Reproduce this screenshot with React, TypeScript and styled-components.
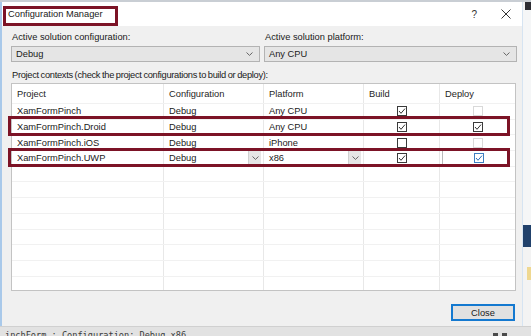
import React from 'react';
import styled, { createGlobalStyle } from 'styled-components';

const GlobalStyle = createGlobalStyle`
  html, body {
    margin: 0;
    padding: 0;
  }
  body {
    width: 531px;
    height: 336px;
    overflow: hidden;
    background: #e4e4e4;
    font-family: "Liberation Sans", "Noto Sans", sans-serif;
    color: #1a1a1a;
  }
`;

const COLS = '152px 100px 100px 76px 1fr';

const Screen = styled.div`
  width: 531px;
  height: 336px;
  display: flex;
  flex-direction: column;
  overflow: hidden;
`;

const TopStrip = styled.div`
  height: 2px;
  background: #c9ced4;
  flex: none;
`;

const Middle = styled.div`
  height: 324px;
  display: flex;
  flex: none;
`;

const Dialog = styled.div`
  width: 523px;
  box-sizing: border-box;
  border-left: 2px solid #a9c9ea;
  border-right: 1px solid #d6e4f2;
  background: #f0f0f0;
  display: flex;
  flex-direction: column;
`;

const TitleBar = styled.div`
  position: relative;
  height: 24px;
  background: #ffffff;
  display: flex;
  align-items: center;
  padding-left: 6px;
  font-size: 9.3px;
  flex: none;
`;

const TitleText = styled.span`
  flex: 1;
`;

const HelpGlyph = styled.span`
  font-size: 10px;
  color: #333;
  margin-right: 24px;
`;

const CloseX = styled.svg`
  width: 10px;
  height: 10px;
  margin-right: 11px;
`;

const Callout = styled.div<{ $top: number; $left: number; $w: number; $h: number }>`
  position: absolute;
  top: ${(p) => p.$top}px;
  left: ${(p) => p.$left}px;
  width: ${(p) => p.$w}px;
  height: ${(p) => p.$h}px;
  box-sizing: border-box;
  border: 3px solid #7c1326;
  pointer-events: none;
`;

const Body = styled.div`
  flex: 1;
  display: flex;
  flex-direction: column;
  padding: 5px 5px 0 9px;
  font-size: 9.3px;
`;

const SolutionRow = styled.div`
  display: grid;
  grid-template-columns: 249px 1fr;
  column-gap: 4px;
`;

const Field = styled.div`
  display: flex;
  flex-direction: column;
  gap: 3px;
`;

const Label = styled.div`
  height: 12px;
  line-height: 12px;
  padding-left: 1px;
`;

const Select = styled.div`
  height: 16px;
  box-sizing: border-box;
  border: 1px solid #b3b3b3;
  background: #e5e5e5;
  display: flex;
  align-items: center;
  padding: 0 6px 0 4px;
`;

const SelectText = styled.span`
  flex: 1;
`;

const Chevron = styled.svg`
  width: 7px;
  height: 4px;
`;

const ContextsLabel = styled(Label)`
  margin-top: 7px;
  letter-spacing: -0.3px;
  word-spacing: -0.5px;
`;

const TableWrap = styled.div`
  position: relative;
  margin-top: 2px;
  margin-right: 1px;
  height: 208px;
  box-sizing: border-box;
  border: 1px solid #c3c3c3;
  background: #ffffff;
`;

const Rows = styled.div`
  height: 100%;
  overflow: hidden;
`;

const HeaderRow = styled.div`
  display: grid;
  grid-template-columns: ${COLS};
  height: 19px;
  align-items: stretch;
`;

const Row = styled.div`
  display: grid;
  grid-template-columns: ${COLS};
  height: 15.7px;
  box-sizing: border-box;
  border-top: 1px solid #f1f1f1;
`;

const Cell = styled.div<{ $center?: boolean; $editing?: boolean }>`
  display: flex;
  align-items: center;
  justify-content: ${(p) => (p.$center ? 'center' : 'flex-start')};
  padding-left: ${(p) => (p.$center ? 0 : 5)}px;
  border-right: 1px solid #e8e8e8;
  box-sizing: border-box;
  overflow: hidden;
  white-space: nowrap;
  ${(p) => (p.$editing ? 'border-left: 1px solid #b9b9b9; margin-left: 2px;' : '')}
  &:last-child {
    border-right: none;
  }
`;

const HeadCell = styled(Cell)`
  color: #1e1e1e;
`;

const Combo = styled.div`
  flex: 1;
  display: flex;
  align-items: stretch;
  height: 100%;
  margin-left: -5px;
  padding-left: 5px;
  background: #ffffff;
`;

const ComboText = styled.span`
  flex: 1;
  display: flex;
  align-items: center;
`;

const ComboButton = styled.div`
  width: 12px;
  margin-right: 2px;
  background: #e6e6e6;
  border-left: 1px solid #d0d0d0;
  display: flex;
  align-items: center;
  justify-content: center;
`;

const Box = styled.svg<{ $tone: 'on' | 'off' | 'blue' }>`
  width: 10px;
  height: 10px;
  rect {
    fill: #ffffff;
    stroke: ${(p) => (p.$tone === 'off' ? '#d9d9d9' : p.$tone === 'blue' ? '#3d7fc2' : '#3a3a3a')};
  }
  polyline {
    stroke: ${(p) => (p.$tone === 'blue' ? '#2c6fb8' : '#333')};
  }
`;

const Footer = styled.div`
  height: 35px;
  display: flex;
  justify-content: flex-end;
  align-items: flex-start;
  padding-top: 13px;
  box-sizing: border-box;
`;

const Button = styled.div`
  width: 64px;
  height: 17px;
  margin-right: 2px;
  box-sizing: border-box;
  border: 2px solid #1479d0;
  background: #e1e1e1;
  display: flex;
  align-items: center;
  justify-content: center;
  font-size: 9.3px;
`;

const Gutter = styled.div`
  flex: 1;
  display: flex;
  flex-direction: column;
  background: #f3f3f3;
`;

const GutterBlock = styled.div<{ $h: number; $bg: string; $indent?: number }>`
  height: ${(p) => p.$h}px;
  background: ${(p) => p.$bg};
  margin-left: ${(p) => p.$indent ?? 0}px;
  flex: none;
`;

const BottomStrip = styled.div`
  flex: 1;
  background: #e2e2e2;
  border-top: 1px solid #d0d0d0;
  display: flex;
  overflow: hidden;
  font-family: "DejaVu Sans Mono", "Liberation Mono", monospace;
  font-size: 8.6px;
  color: #3a3a3a;
`;

const StatusText = styled.div`
  padding: 2px 0 0 5px;
  line-height: 12px;
  flex: 1;
  white-space: nowrap;
`;

const StatusMarks = styled.div`
  display: flex;
  gap: 4px;
  align-items: flex-end;
  margin-right: 24px;
  span {
    width: 5px;
    height: 3px;
    background: #4a4a4a;
  }
`;

type Tone = 'on' | 'off' | 'blue';

const Check = ({ tone, checked }: { tone: Tone; checked: boolean }) => (
  <Box $tone={tone} viewBox="0 0 10 10">
    <rect x="0.5" y="0.5" width="9" height="9" strokeWidth="1" />
    {checked && <polyline points="2,5 4,7.3 8,2.6" fill="none" strokeWidth="1" />}
  </Box>
);

const Down = () => (
  <Chevron viewBox="0 0 7 4">
    <polyline points="0.5,0.5 3.5,3.4 6.5,0.5" fill="none" stroke="#666" strokeWidth="1" />
  </Chevron>
);

type Project = {
  name: string;
  config: string;
  platform: string;
  build: [boolean, Tone];
  deploy: [boolean, Tone];
  editing?: boolean;
};

const projects: Project[] = [
  { name: 'XamFormPinch', config: 'Debug', platform: 'Any CPU', build: [true, 'on'], deploy: [false, 'off'] },
  { name: 'XamFormPinch.Droid', config: 'Debug', platform: 'Any CPU', build: [true, 'on'], deploy: [true, 'on'] },
  { name: 'XamFormPinch.iOS', config: 'Debug', platform: 'iPhone', build: [false, 'on'], deploy: [false, 'off'] },
  { name: 'XamFormPinch.UWP', config: 'Debug', platform: 'x86', build: [true, 'on'], deploy: [true, 'blue'], editing: true },
];

const App = () => {
  return (
    <>
      <GlobalStyle />
      <Screen>
        <TopStrip />
        <Middle>
          <Dialog>
            <TitleBar>
              <TitleText>Configuration Manager</TitleText>
              <HelpGlyph>?</HelpGlyph>
              <CloseX viewBox="0 0 10 10">
                <path d="M0.5 0.5 L9.5 9.5 M9.5 0.5 L0.5 9.5" stroke="#333" strokeWidth="1" />
              </CloseX>
              <Callout $top={4} $left={1} $w={115} $h={20} />
            </TitleBar>
            <Body>
              <SolutionRow>
                <Field>
                  <Label>Active solution configuration:</Label>
                  <Select>
                    <SelectText>Debug</SelectText>
                    <Down />
                  </Select>
                </Field>
                <Field>
                  <Label>Active solution platform:</Label>
                  <Select>
                    <SelectText>Any CPU</SelectText>
                    <Down />
                  </Select>
                </Field>
              </SolutionRow>
              <ContextsLabel>Project contexts (check the project configurations to build or deploy):</ContextsLabel>
              <TableWrap>
                <Rows>
                  <HeaderRow>
                    <HeadCell>Project</HeadCell>
                    <HeadCell>Configuration</HeadCell>
                    <HeadCell>Platform</HeadCell>
                    <HeadCell>Build</HeadCell>
                    <HeadCell>Deploy</HeadCell>
                  </HeaderRow>
                  {projects.map((p) => (
                    <Row key={p.name}>
                      <Cell>{p.name}</Cell>
                      <Cell>
                        {p.editing ? (
                          <Combo>
                            <ComboText>{p.config}</ComboText>
                            <ComboButton>
                              <Down />
                            </ComboButton>
                          </Combo>
                        ) : (
                          p.config
                        )}
                      </Cell>
                      <Cell>
                        {p.editing ? (
                          <Combo>
                            <ComboText>{p.platform}</ComboText>
                            <ComboButton>
                              <Down />
                            </ComboButton>
                          </Combo>
                        ) : (
                          p.platform
                        )}
                      </Cell>
                      <Cell $center>
                        <Check checked={p.build[0]} tone={p.build[1]} />
                      </Cell>
                      <Cell $center $editing={p.editing}>
                        <Check checked={p.deploy[0]} tone={p.deploy[1]} />
                      </Cell>
                    </Row>
                  ))}
                  {Array.from({ length: 8 }).map((_, i) => (
                    <Row key={i}>
                      <Cell />
                      <Cell />
                      <Cell />
                      <Cell />
                      <Cell />
                    </Row>
                  ))}
                </Rows>
                <Callout $top={32} $left={-4} $w={502} $h={20} />
                <Callout $top={64} $left={-4} $w={502} $h={19} />
              </TableWrap>
              <Footer>
                <Button>Close</Button>
              </Footer>
            </Body>
          </Dialog>
          <Gutter>
            <GutterBlock $h={8} $bg="#2d2d33" $indent={2} />
            <GutterBlock $h={215} $bg="#f5f6f7" />
            <GutterBlock $h={22} $bg="#21416b" />
            <GutterBlock $h={20} $bg="#f3f3f3" />
            <GutterBlock $h={13} $bg="#efd891" $indent={4} />
          </Gutter>
        </Middle>
        <BottomStrip>
          <StatusText>inchForm : Configuration: Debug x86</StatusText>
          <StatusMarks>
            <span />
            <span />
          </StatusMarks>
        </BottomStrip>
      </Screen>
    </>
  );
};

export default App;
